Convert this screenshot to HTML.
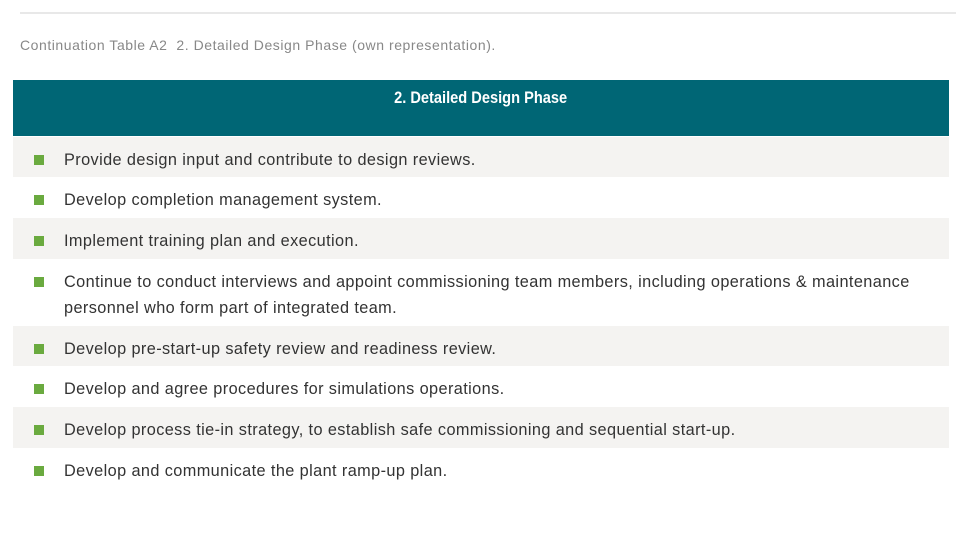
<!DOCTYPE html>
<html><head><meta charset="utf-8"><style>
body{margin:0;width:980px;height:537px;background:#fff;font-family:"Liberation Sans",sans-serif;position:relative;overflow:hidden}
.hr{position:absolute;left:20px;top:12px;width:936px;height:2px;background:#e8e8e8}
.cap{position:absolute;left:20px;top:37px;font-size:14px;letter-spacing:0.55px;color:#888}
.hd{position:absolute;left:13px;top:80px;width:936px;height:56px;background:#006675;color:#fff;font-weight:bold;font-size:17px;text-align:center;line-height:36px}
.hd b{display:inline-block;transform:scaleX(0.86)}
.r{position:absolute;left:13px;width:936px;font-size:16.3px;letter-spacing:0.4px;color:#333;line-height:26px}
.r.g{background:#f4f3f1}
.r span{position:absolute;left:51px;top:10px;right:20px}
.r i{position:absolute;left:21px;top:18px;width:10px;height:10px;background:#6aaa3f}
</style></head><body>
<div class="hr"></div>
<div class="cap">Continuation Table A2&nbsp; 2. Detailed Design Phase (own representation).</div>
<div class="hd"><b>2. Detailed Design Phase</b></div>
<div class="r g" style="top:137px;height:40px"><i></i><span>Provide design input and contribute to design reviews.</span></div>
<div class="r" style="top:177px;height:41px"><i></i><span>Develop completion management system.</span></div>
<div class="r g" style="top:218px;height:41px"><i></i><span>Implement training plan and execution.</span></div>
<div class="r" style="top:259px;height:67px"><i></i><span style="right:25px">Continue to conduct interviews and appoint commissioning team members, including operations &amp; maintenance personnel who form part of integrated team.</span></div>
<div class="r g" style="top:326px;height:40px"><i></i><span>Develop pre-start-up safety review and readiness review.</span></div>
<div class="r" style="top:366px;height:41px"><i></i><span>Develop and agree procedures for simulations operations.</span></div>
<div class="r g" style="top:407px;height:41px"><i></i><span>Develop process tie-in strategy, to establish safe commissioning and sequential start-up.</span></div>
<div class="r" style="top:448px;height:41px"><i></i><span>Develop and communicate the plant ramp-up plan.</span></div>
</body></html>
